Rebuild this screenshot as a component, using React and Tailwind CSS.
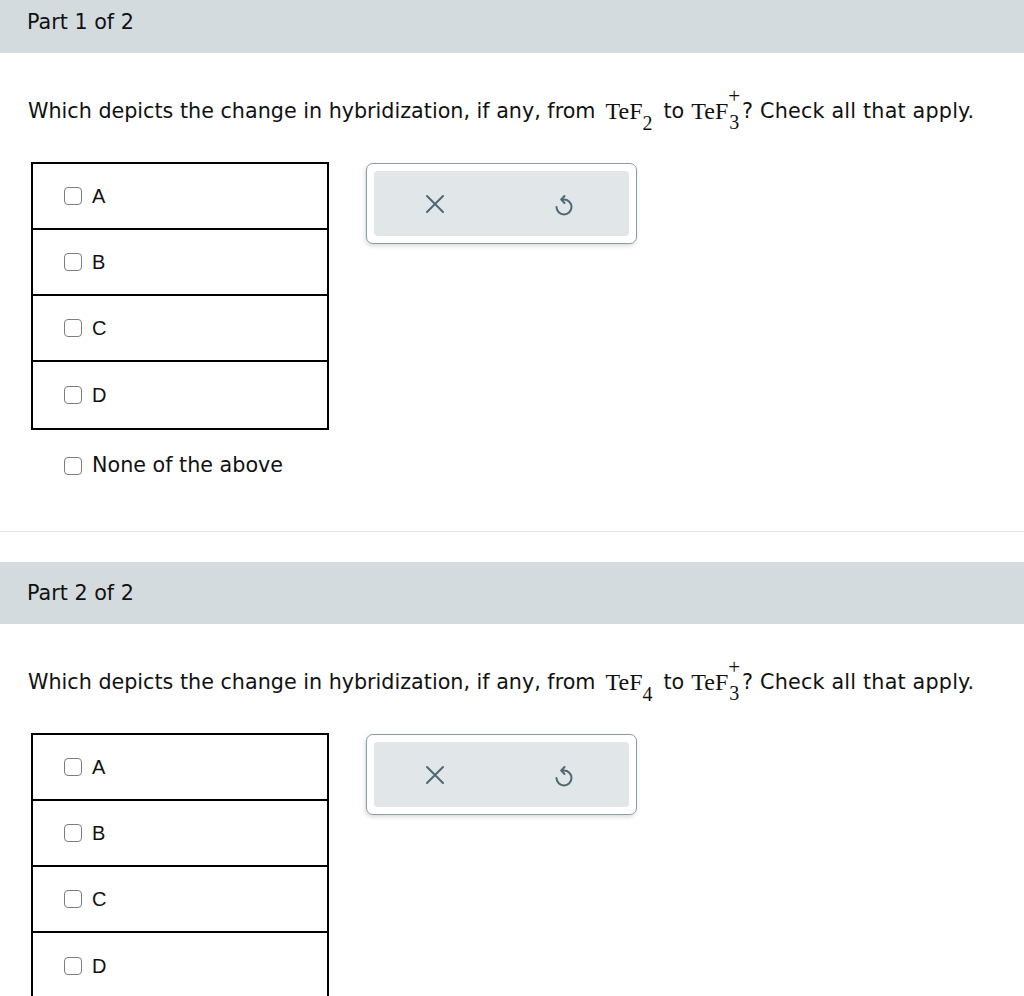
import React from "react";

const UndoIcon = () => (
  <svg width="24" height="24" viewBox="0 0 24 24" fill="none" stroke="#4e6874" strokeWidth="2" strokeLinecap="round" strokeLinejoin="round">
    <path d="M9.5 7.5H12a7.5 7.5 0 1 1-7.5 7.5" />
    <path d="M12.5 4L9.3 7.5L12.5 11" />
  </svg>
);

const CloseIcon = () => (
  <svg width="20" height="20" viewBox="0 0 20 20" fill="none" stroke="#4e6874" strokeWidth="2" strokeLinecap="round">
    <path d="M2 2L18 18M18 2L2 18" />
  </svg>
);

const Check = ({ label, letter }) => (
  <label className="flex items-center gap-[10px]">
    <span className="w-[18px] h-[18px] rounded-[4px] border border-[#7d7d7d] bg-white shrink-0" />
    <span className={letter ? "font-['Liberation_Sans'] text-[20px]" : ""}>{label}</span>
  </label>
);

const Formula = ({ sub, sup }) => (
  <span className={"font-['Liberation_Serif'] text-[24px] inline-flex items-center " + (sup ? "ml-[7px] mr-[2px]" : "ml-[10px] mr-[11px]")}>
    <span>TeF</span>
    {sup ? (
      <span className="inline-flex flex-col items-center text-[20px] gap-[10px] -translate-y-[1px]">
        <span className="leading-[14px] text-[21px]">+</span>
        <span className="leading-[18px]">{sub}</span>
      </span>
    ) : (
      <span className="text-[20px] leading-[18px] translate-y-[12px]">{sub}</span>
    )}
  </span>
);

const ActionBox = () => (
  <div className="ml-[37px] mt-px w-[271px] h-[81px] rounded-[7px] border-[1.5px] border-[#8a9ea8] bg-white shadow-[-1px_2px_4px_rgba(0,0,0,0.15)] p-[7px]">
    <div className="h-full rounded-[4px] bg-[#e1e6e9] flex items-center pl-[51px] gap-[107px]">
      <CloseIcon />
      <UndoIcon />
    </div>
  </div>
);

const Part = ({ num, from, first }) => (
  <section className={first ? "-mt-[9px]" : ""}>
    <div className="h-[62px] bg-[#d4dbdf] flex items-center pl-[27px] pt-[2px]">
      Part {num} of 2
    </div>
    <p className="mt-[44px] pl-[28px] h-[28px] leading-[28px] whitespace-nowrap flex items-center">
      Which depicts the change in hybridization, if any, from
      <Formula sub={from} />
      to
      <Formula sub="3" sup />
      <span className="tracking-[0.2px]">? Check all that apply.</span>
    </p>
    <div className="mt-[37px] flex items-start">
      <div className="ml-[31px] w-[298px] border-2 border-black divide-y-2 divide-black">
        {["A", "B", "C", "D"].map((l) => (
          <div key={l} className="h-[66px] flex items-center pl-[31px]">
            <Check label={l} letter />
          </div>
        ))}
      </div>
      <ActionBox />
    </div>
    {first && (
      <>
        <div className="mt-[22px] pl-[64px] h-[28px] flex items-center">
          <Check label="None of the above" />
        </div>
        <div className="mt-[51px] border-t border-[#dde2e5]" />
        <div className="h-[30px]" />
      </>
    )}
  </section>
);

export default function App() {
  return (
    <div className="w-[1024px] h-[996px] overflow-hidden bg-white text-[#111] text-[20.7px] font-['DejaVu_Sans',sans-serif]">
      <Part num={1} from="2" first />
      <Part num={2} from="4" />
    </div>
  );
}
